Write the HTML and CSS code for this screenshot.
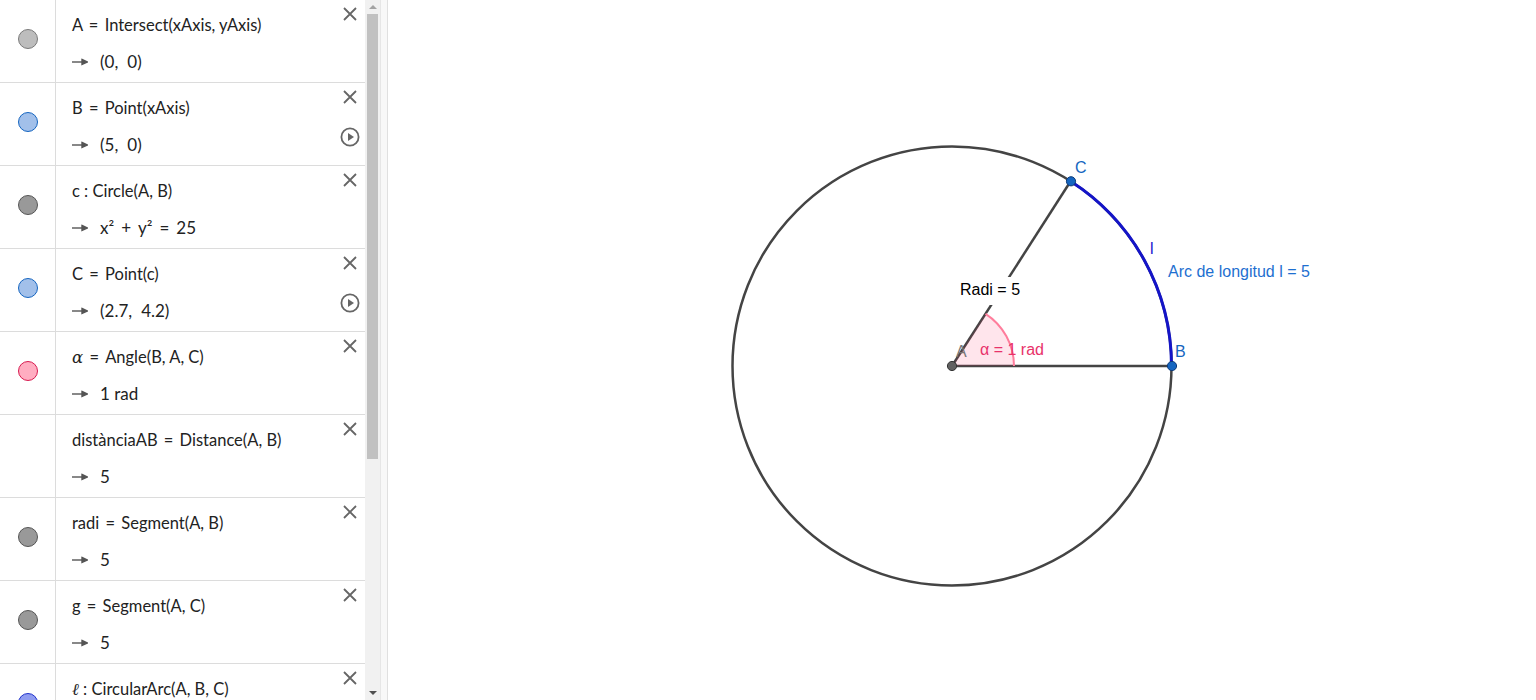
FILE: index.html
```html
<!DOCTYPE html>
<html>
<head>
<meta charset="utf-8">
<link rel="stylesheet" href="styles.css">
</head>
<body>
<div class="app">
  <div class="algebra">
    <div class="row">
      <div class="marker"><span class="dot dot-gray-light"></span></div>
      <div class="content">
        <div class="def">A <span class="eq">=</span> Intersect(xAxis, yAxis)</div>
        <div class="val"><svg class="arrow" viewBox="0 0 16 10"><line x1="0" y1="5" x2="13" y2="5"/><path d="M10 2.5 L15.5 5 L10 7.5 Z"/></svg>(0,<span class="cm"></span>0)</div>
      </div>
      <div class="actions"><svg class="close" viewBox="0 0 16 16"><path d="M2 2 L14 14 M14 2 L2 14"/></svg></div>
    </div>
    <div class="row">
      <div class="marker"><span class="dot dot-blue"></span></div>
      <div class="content">
        <div class="def">B <span class="eq">=</span> Point(xAxis)</div>
        <div class="val"><svg class="arrow" viewBox="0 0 16 10"><line x1="0" y1="5" x2="13" y2="5"/><path d="M10 2.5 L15.5 5 L10 7.5 Z"/></svg>(5,<span class="cm"></span>0)</div>
      </div>
      <div class="actions"><svg class="close" viewBox="0 0 16 16"><path d="M2 2 L14 14 M14 2 L2 14"/></svg><svg class="play" viewBox="0 0 20 20"><circle cx="10" cy="10" r="8.6"/><path d="M8 6 L14 10 L8 14 Z"/></svg></div>
    </div>
    <div class="row">
      <div class="marker"><span class="dot dot-gray"></span></div>
      <div class="content">
        <div class="def">c : Circle(A, B)</div>
        <div class="val"><svg class="arrow" viewBox="0 0 16 10"><line x1="0" y1="5" x2="13" y2="5"/><path d="M10 2.5 L15.5 5 L10 7.5 Z"/></svg>x²<span class="op">+</span>y²<span class="op">=</span>25</div>
      </div>
      <div class="actions"><svg class="close" viewBox="0 0 16 16"><path d="M2 2 L14 14 M14 2 L2 14"/></svg></div>
    </div>
    <div class="row">
      <div class="marker"><span class="dot dot-blue"></span></div>
      <div class="content">
        <div class="def">C <span class="eq">=</span> Point(c)</div>
        <div class="val"><svg class="arrow" viewBox="0 0 16 10"><line x1="0" y1="5" x2="13" y2="5"/><path d="M10 2.5 L15.5 5 L10 7.5 Z"/></svg>(2.7,<span class="cm"></span>4.2)</div>
      </div>
      <div class="actions"><svg class="close" viewBox="0 0 16 16"><path d="M2 2 L14 14 M14 2 L2 14"/></svg><svg class="play" viewBox="0 0 20 20"><circle cx="10" cy="10" r="8.6"/><path d="M8 6 L14 10 L8 14 Z"/></svg></div>
    </div>
    <div class="row">
      <div class="marker"><span class="dot dot-pink"></span></div>
      <div class="content">
        <div class="def"><span class="greek">α</span> <span class="eq">=</span> Angle(B, A, C)</div>
        <div class="val"><svg class="arrow" viewBox="0 0 16 10"><line x1="0" y1="5" x2="13" y2="5"/><path d="M10 2.5 L15.5 5 L10 7.5 Z"/></svg>1&nbsp;rad</div>
      </div>
      <div class="actions"><svg class="close" viewBox="0 0 16 16"><path d="M2 2 L14 14 M14 2 L2 14"/></svg></div>
    </div>
    <div class="row">
      <div class="marker"></div>
      <div class="content">
        <div class="def">distànciaAB <span class="eq">=</span> Distance(A, B)</div>
        <div class="val"><svg class="arrow" viewBox="0 0 16 10"><line x1="0" y1="5" x2="13" y2="5"/><path d="M10 2.5 L15.5 5 L10 7.5 Z"/></svg>5</div>
      </div>
      <div class="actions"><svg class="close" viewBox="0 0 16 16"><path d="M2 2 L14 14 M14 2 L2 14"/></svg></div>
    </div>
    <div class="row">
      <div class="marker"><span class="dot dot-gray"></span></div>
      <div class="content">
        <div class="def">radi <span class="eq">=</span> Segment(A, B)</div>
        <div class="val"><svg class="arrow" viewBox="0 0 16 10"><line x1="0" y1="5" x2="13" y2="5"/><path d="M10 2.5 L15.5 5 L10 7.5 Z"/></svg>5</div>
      </div>
      <div class="actions"><svg class="close" viewBox="0 0 16 16"><path d="M2 2 L14 14 M14 2 L2 14"/></svg></div>
    </div>
    <div class="row">
      <div class="marker"><span class="dot dot-gray"></span></div>
      <div class="content">
        <div class="def">g <span class="eq">=</span> Segment(A, C)</div>
        <div class="val"><svg class="arrow" viewBox="0 0 16 10"><line x1="0" y1="5" x2="13" y2="5"/><path d="M10 2.5 L15.5 5 L10 7.5 Z"/></svg>5</div>
      </div>
      <div class="actions"><svg class="close" viewBox="0 0 16 16"><path d="M2 2 L14 14 M14 2 L2 14"/></svg></div>
    </div>
    <div class="row">
      <div class="marker"><span class="dot dot-violet"></span></div>
      <div class="content">
        <div class="def"><span class="greek">ℓ</span> : CircularArc(A, B, C)</div>
      </div>
      <div class="actions"><svg class="close" viewBox="0 0 16 16"><path d="M2 2 L14 14 M14 2 L2 14"/></svg></div>
    </div>
  </div>
  <div class="scrollbar">
    <div class="sb-btn"><span class="tri-up"></span></div>
    <div class="sb-thumb"></div>
    <div class="sb-rest"></div>
    <div class="sb-btn"><span class="tri-down"></span></div>
  </div>
  <div class="divider"></div>
  <div class="graphics">
    <svg class="canvas" viewBox="388 0 1148 700" width="1148" height="700">
      <circle cx="952" cy="366" r="219.5" class="obj"/>
      <line x1="952" y1="366" x2="1172" y2="366" class="obj"/>
      <line x1="952" y1="366" x2="1070.6" y2="181.3" class="obj"/>
      <rect x="957" y="277" width="66" height="28" fill="#fff"/>
      <path d="M952 366 L1014 366 A62 62 0 0 0 985.5 313.8 Z" class="wedge"/>
      <path d="M1014 366 A62 62 0 0 0 985.5 313.8" class="wedge-edge"/>
      <path d="M1171.5 366 A219.5 219.5 0 0 0 1070.6 181.3" class="arc"/>
      <circle cx="952" cy="366" r="4.6" class="pt-gray"/>
      <circle cx="1172" cy="366" r="4.6" class="pt-blue"/>
      <circle cx="1071" cy="181.3" r="4.6" class="pt-blue"/>
      <text x="1075" y="173" class="lbl blue">C</text>
      <text x="1175" y="357" class="lbl blue">B</text>
      <text x="956" y="357" class="lbl gray">A</text>
      <text x="980" y="355" class="lbl pink">α = 1 rad</text>
      <text x="1150" y="254" class="lbl darkblue">l</text>
      <text x="1168" y="277" class="lbl blue2">Arc de longitud l = 5</text>
      <text x="960" y="295" class="lbl black">Radi = 5</text>
    </svg>
  </div>
</div>
</body>
</html>
```

FILE: styles.css
```css
html, body {
  margin: 0;
  padding: 0;
  background: #fff;
}
.app {
  display: flex;
  width: 1536px;
  height: 700px;
  overflow: hidden;
}
.algebra {
  width: 365px;
  height: 700px;
  overflow: hidden;
  flex: none;
  display: flex;
  flex-direction: column;
  font-family: "Lato", "DejaVu Sans", sans-serif;
  font-size: 16.5px;
  color: #222;
}
.row {
  flex: none;
  height: 82px;
  border-bottom: 1px solid #dcdcdc;
  display: flex;
}
.marker {
  width: 56px;
  border-right: 1px solid #dcdcdc;
  flex: none;
  display: flex;
  justify-content: center;
  padding-top: 29px;
  box-sizing: border-box;
}
.dot {
  width: 18px;
  height: 18px;
  border-radius: 50%;
  box-sizing: content-box;
}
.dot-gray-light { background: #bdbdbd; border: 1px solid #7a7a7a; }
.dot-gray { background: #999; border: 1px solid #555; }
.dot-blue { background: #a2c0ea; border: 1px solid #1565c0; }
.dot-pink { background: #ffadc1; border: 1px solid #d81b50; }
.dot-violet { background: #8f9cf0; border: 1px solid #2233cc; }
.content {
  flex: 1;
  padding-left: 16px;
  padding-top: 14px;
  box-sizing: border-box;
}
.def {
  height: 22px;
  line-height: 22px;
  white-space: nowrap;
}
.val {
  margin-top: 15px;
  height: 22px;
  line-height: 22px;
  white-space: nowrap;
  display: flex;
  align-items: center;
  font-size: 17px;
}
.cm {
  display: inline-block;
  width: 9px;
}
.eq {
  margin: 0 2px;
}
.op {
  margin: 0 7px;
}
.greek {
  font-family: "DejaVu Serif", "Liberation Serif", serif;
  font-style: italic;
}
.arrow {
  width: 16px;
  height: 10px;
  margin-right: 12px;
  stroke: #555;
  fill: #555;
  stroke-width: 1.4;
}
.actions {
  width: 30px;
  flex: none;
  display: flex;
  flex-direction: column;
  align-items: center;
  padding-top: 6px;
  box-sizing: border-box;
}
.close {
  width: 16px;
  height: 16px;
  fill: none;
  stroke: #666;
  stroke-width: 1.8;
}
.play {
  width: 20px;
  height: 20px;
  margin-top: 22px;
}
.play circle {
  fill: none;
  stroke: #666;
  stroke-width: 1.8;
}
.play path {
  fill: #666;
}
.scrollbar {
  width: 15px;
  flex: none;
  height: 700px;
  background: #f1f1f1;
  display: flex;
  flex-direction: column;
  align-items: center;
}
.sb-btn {
  height: 14px;
  width: 15px;
  display: flex;
  align-items: center;
  justify-content: center;
  flex: none;
}
.tri-up {
  width: 0;
  height: 0;
  border-left: 4px solid transparent;
  border-right: 4px solid transparent;
  border-bottom: 4px solid #a3a3a3;
}
.tri-down {
  width: 0;
  height: 0;
  border-left: 4px solid transparent;
  border-right: 4px solid transparent;
  border-top: 4px solid #505050;
}
.sb-thumb {
  width: 11px;
  height: 445px;
  background: #c1c1c1;
  flex: none;
}
.sb-rest {
  flex: 1;
}
.divider {
  width: 6px;
  flex: none;
  background: #f8f8f8;
  border-left: 1px solid #e6e6e6;
  border-right: 1px solid #e0e0e0;
}
.graphics {
  flex: 1;
  height: 700px;
}
.canvas {
  display: block;
}
.obj {
  fill: none;
  stroke: #444;
  stroke-width: 2.5;
}
.wedge {
  fill: rgba(255, 40, 100, 0.12);
  stroke: none;
}
.wedge-edge {
  fill: none;
  stroke: #ff7d9c;
  stroke-width: 2;
}
.arc {
  fill: none;
  stroke: #1414c8;
  stroke-width: 3;
}
.pt-blue {
  fill: #1565c0;
  stroke: #0d3a78;
  stroke-width: 1;
}
.pt-gray {
  fill: #616161;
  stroke: #333;
  stroke-width: 1;
}
.lbl {
  font-family: "Liberation Sans", Arial, sans-serif;
  font-size: 16px;
}
.blue { fill: #1565c0; }
.blue2 { fill: #1e6fd0; }
.darkblue { fill: #1a1ad0; }
.gray { fill: #777; }
.pink { fill: #e8336a; }
.black { fill: #000; }
```
